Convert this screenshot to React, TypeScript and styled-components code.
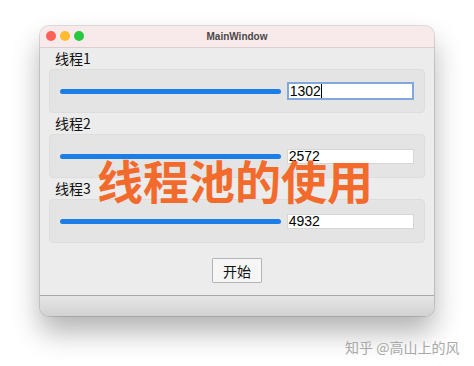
import styled, { createGlobalStyle } from "styled-components";

const GlobalStyle = createGlobalStyle`
  html, body {
    margin: 0;
    padding: 0;
    background: #ffffff;
  }
  body {
    font-family: "Liberation Sans", "Noto Sans CJK SC", sans-serif;
  }
`;

const threads = [
  { label: "线程1", value: "1302", focused: true },
  { label: "线程2", value: "2572", focused: false },
  { label: "线程3", value: "4932", focused: false },
];

export default function App() {
  return (
    <>
      <GlobalStyle />
      <StyledStage>
        <StyledWindow>
          <StyledTitleBar>
            <StyledLights>
              <StyledLight color="#fe5f57" />
              <StyledLight color="#febc2e" />
              <StyledLight color="#28c840" />
            </StyledLights>
            <StyledTitle>MainWindow</StyledTitle>
          </StyledTitleBar>
          <StyledContent>
            {threads.map((t) => (
              <div key={t.label}>
                <StyledLabel>{t.label}</StyledLabel>
                <StyledGroup>
                  <StyledTrack />
                  <StyledInput focused={t.focused}>
                    {t.value}
                    {t.focused && <StyledCaret />}
                  </StyledInput>
                </StyledGroup>
              </div>
            ))}
            <StyledButtonRow>
              <StyledButton>开始</StyledButton>
            </StyledButtonRow>
          </StyledContent>
          <StyledStatusBar />
        </StyledWindow>
        <StyledOverlay>线程池的使用</StyledOverlay>
        <StyledWatermark>知乎 @高山上的风</StyledWatermark>
      </StyledStage>
    </>
  );
}

const StyledStage = styled.div`
  position: relative;
  width: 474px;
  height: 366px;
  box-sizing: border-box;
  padding: 26px 0 0 40px;
  overflow: hidden;
`;

const StyledWindow = styled.div`
  width: 394px;
  border-radius: 9px;
  background: #ececec;
  box-shadow: 0 0 0 1px rgba(0, 0, 0, 0.12), 0 16px 28px rgba(0, 0, 0, 0.3);
  overflow: hidden;
`;

const StyledTitleBar = styled.div`
  position: relative;
  height: 21px;
  display: flex;
  align-items: center;
  justify-content: center;
  background: #f8eaea;
  border-bottom: 1px solid #d9cfcf;
`;

const StyledLights = styled.div`
  position: absolute;
  left: 6px;
  top: 5px;
  display: flex;
  gap: 4px;
`;

const StyledLight = styled.span<{ color: string }>`
  width: 10px;
  height: 10px;
  border-radius: 50%;
  background: ${(p) => p.color};
`;

const StyledTitle = styled.div`
  font-family: "Liberation Sans", "DejaVu Sans", sans-serif;
  font-size: 10px;
  font-weight: bold;
  color: #4b4848;
`;

const StyledContent = styled.div`
  padding: 0 9px 12px;
  border-bottom: 1px solid #a8a8a8;
`;

const StyledLabel = styled.div`
  height: 21px;
  line-height: 21px;
  padding-left: 6px;
  font-family: "Noto Sans CJK SC", sans-serif;
  font-size: 14px;
  color: #111;
`;

const StyledGroup = styled.div`
  height: 44px;
  box-sizing: border-box;
  display: flex;
  align-items: center;
  gap: 6px;
  padding: 0 10px;
  background: #e4e4e4;
  border: 1px solid #dddddd;
  border-radius: 4px;
`;

const StyledTrack = styled.div`
  width: 222px;
  height: 5px;
  border-radius: 3px;
  background: #1a7ee6;
`;

const StyledInput = styled.div<{ focused: boolean }>`
  position: relative;
  width: 128px;
  height: ${(p) => (p.focused ? "18px" : "15px")};
  box-sizing: border-box;
  display: flex;
  align-items: center;
  background: #ffffff;
  border: ${(p) => (p.focused ? "2px solid #7fa8dc" : "1px solid #d6d6d6")};
  padding-left: 1px;
  font-family: "Liberation Sans", sans-serif;
  font-size: 14px;
  line-height: 1;
  color: #000;
`;

const StyledCaret = styled.span`
  width: 1px;
  height: 14px;
  background: #000;
`;

const StyledButtonRow = styled.div`
  display: flex;
  justify-content: center;
  padding-top: 15px;
`;

const StyledButton = styled.button`
  width: 50px;
  height: 25px;
  padding: 0;
  background: #f6f6f6;
  border: 1px solid #b4b4b4;
  border-radius: 1px;
  font-family: "Noto Sans CJK SC", sans-serif;
  font-size: 14px;
  color: #111;
`;

const StyledStatusBar = styled.div`
  height: 20px;
  background: linear-gradient(#e6e6e6, #d2d2d2);
`;

const StyledOverlay = styled.div`
  position: absolute;
  left: 97px;
  top: 156px;
  font-family: "Noto Sans CJK SC", sans-serif;
  font-size: 46px;
  font-weight: bold;
  line-height: 1;
  color: #f26b2c;
  white-space: nowrap;
`;

const StyledWatermark = styled.div`
  position: absolute;
  left: 345px;
  top: 337px;
  font-family: "Noto Sans CJK SC", sans-serif;
  font-size: 14px;
  color: #a8a8a8;
  white-space: nowrap;
`;
